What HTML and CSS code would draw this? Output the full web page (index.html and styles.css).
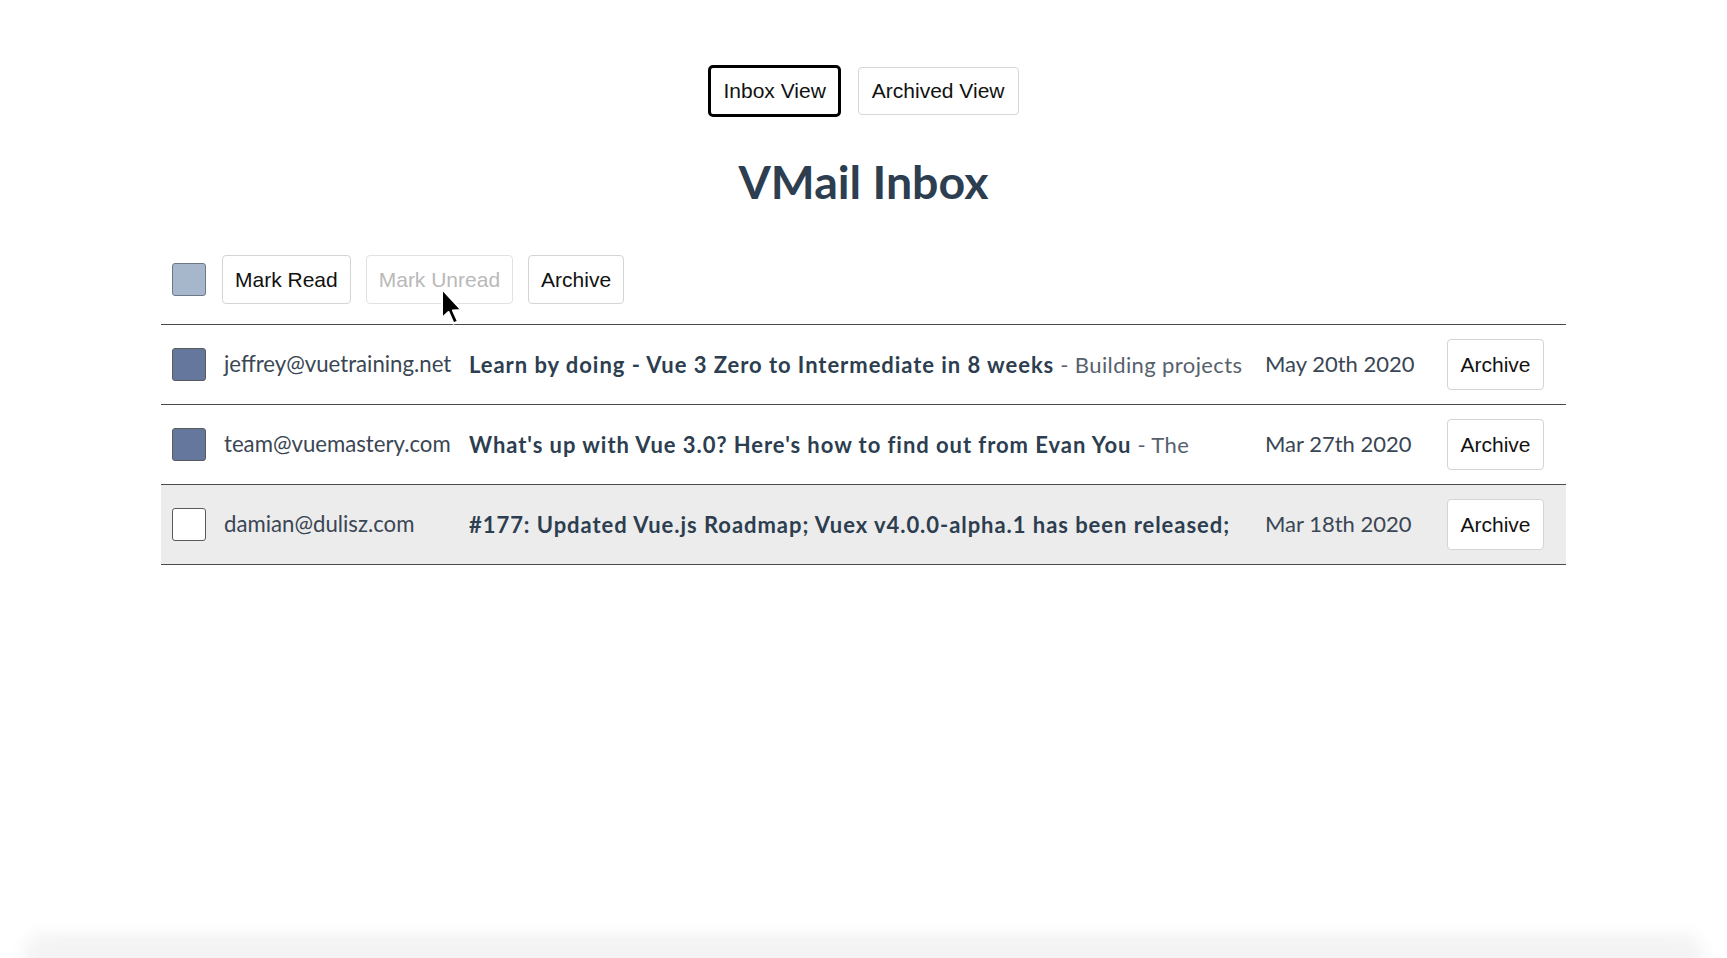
FILE: index.html
```html
<!DOCTYPE html>
<html lang="en">
<head>
<meta charset="utf-8">
<title>VMail Inbox</title>
<link rel="stylesheet" href="styles.css">
</head>
<body>
<div class="app">
  <nav class="view-nav">
    <button class="nav-btn is-active">Inbox View</button>
    <button class="nav-btn">Archived View</button>
  </nav>
  <h1 class="title">VMail Inbox</h1>
  <div class="mail-list">
    <div class="toolbar">
      <span class="check check-partial"></span>
      <button class="btn">Mark Read</button>
      <button class="btn is-disabled">Mark Unread</button>
      <button class="btn">Archive</button>
    </div>
    <div class="rows">
      <div class="row">
        <span class="check check-on"></span>
        <span class="from">jeffrey@vuetraining.net</span>
        <span class="subject"><strong>Learn by doing - Vue 3 Zero to Intermediate in 8 weeks</strong> - Building projects</span>
        <span class="date">May 20th 2020</span>
        <button class="btn row-btn">Archive</button>
      </div>
      <div class="row">
        <span class="check check-on"></span>
        <span class="from">team@vuemastery.com</span>
        <span class="subject"><strong>What's up with Vue 3.0? Here's how to find out from Evan You</strong> - The</span>
        <span class="date">Mar 27th 2020</span>
        <button class="btn row-btn">Archive</button>
      </div>
      <div class="row is-read">
        <span class="check"></span>
        <span class="from">damian@dulisz.com</span>
        <span class="subject"><strong>#177: Updated Vue.js Roadmap; Vuex v4.0.0-alpha.1 has been released;</strong></span>
        <span class="date">Mar 18th 2020</span>
        <button class="btn row-btn">Archive</button>
      </div>
    </div>
  </div>
</div>
<svg class="cursor" width="24" height="38" viewBox="0 0 24 38" aria-hidden="true">
  <path d="M2 1 L2 30 L8.5 24 L13.5 35.5 L18 33.5 L13 22.5 L21.5 22 Z" fill="#000" stroke="#fff" stroke-width="2" stroke-linejoin="round"/>
</svg>
<div class="video-shade"></div>
</body>
</html>
```

FILE: styles.css
```css
* { box-sizing: border-box; }

html, body {
  margin: 0;
  padding: 0;
  background: #fff;
}

body {
  font-family: Lato, "Open Sans", sans-serif;
  color: #2c3e50;
  min-height: 958px;
  position: relative;
  overflow: hidden;
}

.app {
  padding-top: 65px;
  display: flex;
  flex-direction: column;
  align-items: center;
}

.view-nav {
  display: flex;
  align-items: center;
  gap: 17px;
  height: 52px;
}

button {
  font-family: "Liberation Sans", Arial, sans-serif;
  color: #111;
  background: #fff;
}

.nav-btn {
  height: 48px;
  padding: 0 13px;
  font-size: 21px;
  border: 1px solid #d6d6d6;
  border-radius: 4px;
}

.nav-btn.is-active {
  border: 3px solid #000;
  padding: 0 12px;
  height: 52px;
  border-radius: 5px;
}

.title {
  margin: 35px 0 0;
  font-size: 46.5px;
  line-height: 58px;
  font-weight: 700;
  color: #2c3e50;
}

.mail-list {
  width: 1405px;
  margin-top: 45px;
}

.toolbar {
  display: flex;
  align-items: center;
  gap: 15px;
  padding-left: 11px;
  height: 49px;
  margin-bottom: 20px;
}

.toolbar .check { margin-right: 1px; }

.btn {
  height: 49px;
  padding: 0 12px;
  font-size: 21px;
  border: 1px solid #d4d4d4;
  border-radius: 4px;
  color: #111;
}

.btn.is-disabled {
  color: #b9b9b9;
  border-color: #e2e2e2;
}

.check {
  display: block;
  width: 34px;
  height: 33px;
  border: 1px solid #5b5b5b;
  border-radius: 3px;
  background: #fff;
}

.check-on { background: #66779d; }
.check-partial { background: #a7b7cb; border-color: #6d7785; }

.rows {
  border-top: 1.5px solid #4a4a4a;
}

.row {
  display: grid;
  grid-template-columns: 34px 227px 778px 164px 97px;
  column-gap: 18px;
  align-items: center;
  height: 80px;
  padding: 0 22px 0 11px;
  border-bottom: 1.5px solid #4a4a4a;
}

.row.is-read { background: #ececec; }

.from {
  font-size: 22.2px;
  font-weight: 400;
  color: #3a4654;
  white-space: nowrap;
  margin-top: -3px;
}

.subject {
  font-size: 22px;
  letter-spacing: 0.4px;
  white-space: nowrap;
  overflow: hidden;
  color: #56616d;
}

.subject strong {
  font-weight: 700;
  letter-spacing: 0.95px;
  color: #2c3e50;
}

.date {
  font-size: 22px;
  color: #3a4654;
  white-space: nowrap;
  margin-top: -3px;
}

.row-btn {
  width: 97px;
  height: 51px;
  padding: 0;
  font-size: 21px;
}

.cursor {
  position: absolute;
  left: 440px;
  top: 288px;
}

.video-shade {
  position: absolute;
  left: 24px;
  right: 24px;
  bottom: -20px;
  height: 44px;
  border-radius: 20px;
  background: #f3f3f3;
  filter: blur(8px);
}
```
